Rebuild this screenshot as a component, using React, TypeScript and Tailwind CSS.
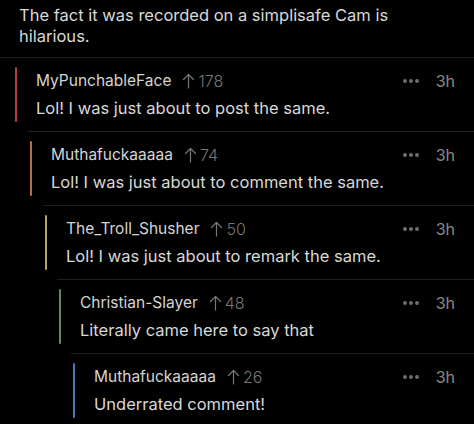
import React from "react";

type Reply = {
  user: string;
  votes: number;
  body: string;
  bar: string;
  wrap: string;
};

const replies: Reply[] = [
  { user: "MyPunchableFace", votes: 178, body: "Lol! I was just about to post the same.", bar: "bg-[#b3403c]", wrap: "ml-0 pl-[15px]" },
  { user: "Muthafuckaaaaa", votes: 74, body: "Lol! I was just about to comment the same.", bar: "bg-[#b8703f]", wrap: "ml-[28px] pl-[2px]" },
  { user: "The_Troll_Shusher", votes: 50, body: "Lol! I was just about to remark the same.", bar: "bg-[#b7a35a]", wrap: "ml-[43px] pl-[2px]" },
  { user: "Christian-Slayer", votes: 48, body: "Literally came here to say that", bar: "bg-[#5f8a62]", wrap: "ml-[57px] pl-[2px]" },
  { user: "Muthafuckaaaaa", votes: 26, body: "Underrated comment!", bar: "bg-[#4a78c0]", wrap: "ml-[71px] pl-[2px]" },
];

function UpArrow() {
  return (
    <svg width="13" height="16" viewBox="0 0 13 16" fill="none" stroke="#777" strokeWidth="1.2" strokeLinecap="round" strokeLinejoin="round">
      <path d="M6.5 15V1.5" />
      <path d="M1.5 6.5L6.5 1.5L11.5 6.5" />
    </svg>
  );
}

function Dots() {
  return (
    <div className="flex gap-[2px] items-center">
      <span className="w-[4px] h-[4px] rounded-full bg-[#6e6e6e]" />
      <span className="w-[4px] h-[4px] rounded-full bg-[#6e6e6e]" />
      <span className="w-[4px] h-[4px] rounded-full bg-[#6e6e6e]" />
    </div>
  );
}

function Comment({ r }: { r: Reply }) {
  return (
    <div className={`border-t border-[#1f1f1f] ${r.wrap}`}>
      <div className="flex py-[9px] pr-[19px]">
        <div className={`w-[2px] self-stretch rounded-sm ${r.bar}`} />
        <div className="flex-1 pl-[19px]">
          <div className="flex items-center h-[27px]">
            <span className="text-[15.5px] text-[#d4d4d4]">{r.user}</span>
            <span className="ml-[11px] flex items-center gap-[3px] text-[16px] font-light text-[#777]">
              <UpArrow />
              {r.votes}
            </span>
            <div className="ml-auto flex items-center">
              <Dots />
              <span className="ml-[17px] text-[16px] text-[#888]">3h</span>
            </div>
          </div>
          <div className="h-[28px] flex items-center text-[16.5px] text-[#d8d8d8]">{r.body}</div>
        </div>
      </div>
    </div>
  );
}

export default function App() {
  return (
    <div className="w-[474px] h-[424px] overflow-hidden bg-black" style={{ fontFamily: "Inter, 'Liberation Sans', sans-serif" }}>
      <div className="pl-[19px] pr-[19px] pt-[5px] pb-[10px] text-[16.5px] leading-[21px] text-[#d9d9d9]">
        The fact it was recorded on a simplisafe Cam is hilarious.
      </div>
      {replies.map((r, i) => (
        <Comment key={i} r={r} />
      ))}
    </div>
  );
}
